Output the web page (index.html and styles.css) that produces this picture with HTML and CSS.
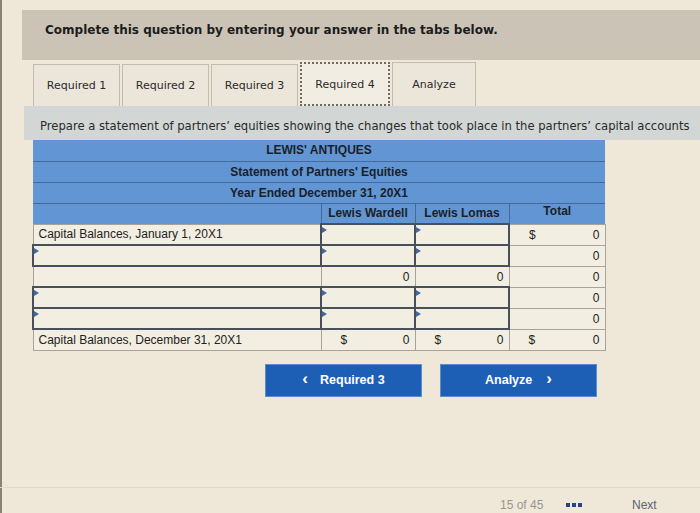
FILE: index.html
```html
<!DOCTYPE html>
<html>
<head>
<meta charset="utf-8">
<link rel="stylesheet" href="styles.css">
</head>
<body>
<div class="edge"></div>
<div class="page">
  <div class="header">Complete this question by entering your answer in the tabs below.</div>
  <div class="tabs">
    <div class="tab">Required 1</div>
    <div class="tab">Required 2</div>
    <div class="tab">Required 3</div>
    <div class="tab active">Required 4</div>
    <div class="tab tall">Analyze</div>
  </div>
  <div class="instr">Prepare a statement of partners’ equities showing the changes that took place in the partners’ capital accounts</div>
  <table class="sheet">
    <colgroup><col class="c-label"><col class="c-num"><col class="c-num"><col class="c-tot"></colgroup>
    <tr class="title"><td colspan="4">LEWIS' ANTIQUES</td></tr>
    <tr class="title"><td colspan="4">Statement of Partners' Equities</td></tr>
    <tr class="title"><td colspan="4">Year Ended December 31, 20X1</td></tr>
    <tr class="colhead"><td class="blank"></td><td class="ch">Lewis Wardell</td><td class="ch">Lewis Lomas</td><td class="ch tot">Total</td></tr>
    <tr><td class="lbl">Capital Balances, January 1, 20X1</td><td class="in"></td><td class="in"></td><td class="val"><span class="cur">$</span><span>0</span></td></tr>
    <tr><td class="in"></td><td class="in"></td><td class="in"></td><td class="val"><span></span><span>0</span></td></tr>
    <tr><td class="lbl"></td><td class="val"><span></span><span>0</span></td><td class="val"><span></span><span>0</span></td><td class="val"><span></span><span>0</span></td></tr>
    <tr><td class="in"></td><td class="in"></td><td class="in"></td><td class="val"><span></span><span>0</span></td></tr>
    <tr><td class="in"></td><td class="in"></td><td class="in"></td><td class="val"><span></span><span>0</span></td></tr>
    <tr><td class="lbl">Capital Balances, December 31, 20X1</td><td class="val"><span class="cur">$</span><span>0</span></td><td class="val"><span class="cur">$</span><span>0</span></td><td class="val"><span class="cur">$</span><span>0</span></td></tr>
  </table>
  <div class="nav">
    <div class="btn"><span class="chev">&lsaquo;</span>Required 3</div>
    <div class="btn">Analyze<span class="chev right">&rsaquo;</span></div>
  </div>
</div>
<div class="footer">
  <span class="count">15 of 45</span>
  <span class="dots"><i></i><i></i><i></i></span>
  <span class="next">Next</span>
</div>
</body>
</html>
```

FILE: styles.css
```css
html, body {
  margin: 0;
  padding: 0;
}
body {
  width: 700px;
  height: 513px;
  overflow: hidden;
  background: #efe8d9;
  position: relative;
  font-family: "DejaVu Sans", Verdana, sans-serif;
  color: #222;
}
.edge {
  position: absolute;
  left: 0;
  top: 0;
  bottom: 0;
  width: 2px;
  background: #8a8276;
}
.page {
  padding: 10px 0 0 22px;
}
.header {
  height: 50px;
  background: #cbc4b6;
  box-sizing: border-box;
  padding: 13px 0 0 23px;
  font-weight: bold;
  font-size: 12px;
  color: #1c1c1c;
}
.tabs {
  display: flex;
  align-items: flex-end;
  margin: 2px 0 0 11px;
  height: 44px;
}
.tab {
  box-sizing: border-box;
  height: 42px;
  width: 87px;
  margin-right: 2px;
  border: 1px solid #c3bcae;
  border-bottom: none;
  background: #ece6da;
  font-size: 11px;
  color: #2a2a2a;
  display: flex;
  align-items: center;
  justify-content: center;
}
.tab.active {
  height: 44px;
  width: 90px;
  border: 2px dotted #6d6a66;
  background: #f2ede3;
}
.tab.tall {
  height: 44px;
  width: 84px;
}
.instr {
  margin-left: 2px;
  height: 34px;
  box-sizing: border-box;
  background: #d2d7d6;
  padding: 13px 0 0 16px;
  font-size: 11.6px;
  white-space: nowrap;
  color: #2a2a2a;
}
.sheet {
  margin: 0 0 0 10px;
  width: 572px;
  border-collapse: collapse;
  table-layout: fixed;
  font-family: "Liberation Sans", Arial, sans-serif;
  font-size: 12px;
  color: #222;
}
.c-label { width: 288px; }
.c-num { width: 94px; }
.c-tot { width: 96px; }
.sheet td {
  height: 21px;
  padding: 0 5px;
  box-sizing: border-box;
}
.title td {
  background: #6295d4;
  text-align: center;
  font-weight: bold;
  color: #1a1f28;
  border-bottom: 1px solid #44699a;
}
.colhead td {
  background: #6295d4;
  font-weight: bold;
  color: #1a1f28;
  text-align: center;
}
.colhead .ch {
  border: 1px solid #44699a;
}
.colhead .tot {
  border: none;
  vertical-align: top;
  padding-top: 0;
}
.lbl, .val {
  background: #f3eee2;
  border: 1px solid #a7a39b;
  white-space: nowrap;
}
.val span {
  display: inline-block;
}
.val {
  text-align: right;
}
.val .cur {
  float: left;
  margin-left: 14px;
}
.in {
  background: #f3eee2;
  border: 2px solid #48505c;
  position: relative;
}
.in::before {
  content: "";
  position: absolute;
  left: 0;
  top: 2px;
  border-left: 5px solid #3e67a3;
  border-top: 3px solid transparent;
  border-bottom: 3px solid transparent;
}
.nav {
  display: flex;
  gap: 20px;
  margin: 14px 0 0 244px;
}
.btn {
  width: 155px;
  height: 31px;
  background: #1e5fb6;
  color: #fff;
  font-family: "Liberation Sans", Arial, sans-serif;
  font-weight: bold;
  font-size: 12.5px;
  display: flex;
  align-items: center;
  justify-content: center;
  box-shadow: 0 0 0 1px #5a8ed0;
}
.chev {
  font-size: 17px;
  margin-right: 12px;
  position: relative;
  top: -1px;
}
.chev.right {
  margin: 0 0 0 14px;
}
.footer {
  position: absolute;
  left: 0;
  right: 0;
  top: 487px;
  bottom: 0;
  border-top: 1px solid #e2dbcc;
  font-family: "Liberation Sans", Arial, sans-serif;
  font-size: 12px;
  color: #5b6472;
}
.footer .count {
  position: absolute;
  left: 500px;
  top: 10px;
  color: #9a968e;
}
.footer .dots {
  position: absolute;
  left: 566px;
  top: 15px;
  display: flex;
  gap: 2px;
}
.footer .dots i {
  width: 4px;
  height: 4px;
  background: #2b3f8c;
}
.footer .next {
  position: absolute;
  left: 632px;
  top: 10px;
}
```
